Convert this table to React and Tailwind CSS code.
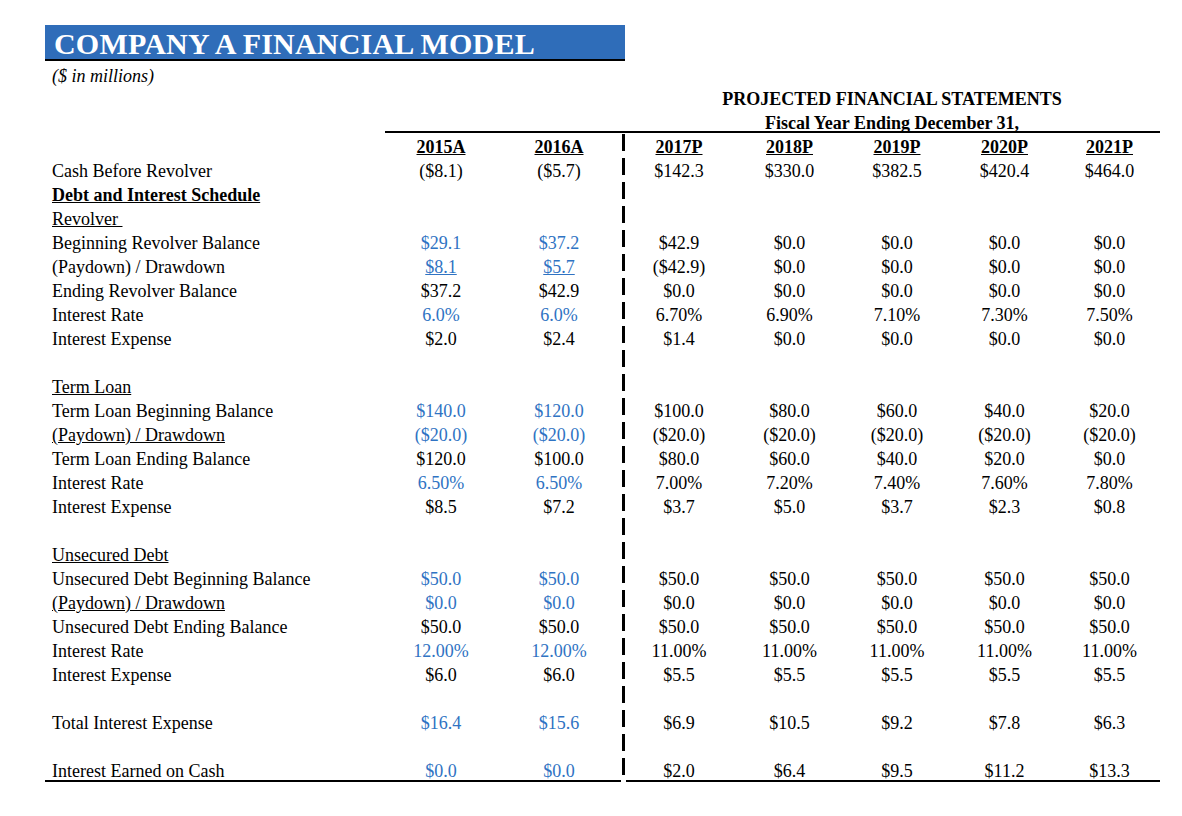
import React from "react";

const B = "blue";
const K = "black";

const rows = [
  { label: "Cash Before Revolver", a: [["($8.1)", K], ["($5.7)", K]], p: ["$142.3", "$330.0", "$382.5", "$420.4", "$464.0"] },
  { label: "Debt and Interest Schedule", ls: "bu" },
  { label: "Revolver\u00a0", ls: "u" },
  { label: "Beginning Revolver Balance", a: [["$29.1", B], ["$37.2", B]], p: ["$42.9", "$0.0", "$0.0", "$0.0", "$0.0"] },
  { label: "(Paydown) / Drawdown", a: [["$8.1", B, true], ["$5.7", B, true]], p: ["($42.9)", "$0.0", "$0.0", "$0.0", "$0.0"] },
  { label: "Ending Revolver Balance", a: [["$37.2", K], ["$42.9", K]], p: ["$0.0", "$0.0", "$0.0", "$0.0", "$0.0"] },
  { label: "Interest Rate", a: [["6.0%", B], ["6.0%", B]], p: ["6.70%", "6.90%", "7.10%", "7.30%", "7.50%"] },
  { label: "Interest Expense", a: [["$2.0", K], ["$2.4", K]], p: ["$1.4", "$0.0", "$0.0", "$0.0", "$0.0"] },
  { label: "" },
  { label: "Term Loan", ls: "u" },
  { label: "Term Loan Beginning Balance", a: [["$140.0", B], ["$120.0", B]], p: ["$100.0", "$80.0", "$60.0", "$40.0", "$20.0"] },
  { label: "(Paydown) / Drawdown", ls: "u", a: [["($20.0)", B], ["($20.0)", B]], p: ["($20.0)", "($20.0)", "($20.0)", "($20.0)", "($20.0)"] },
  { label: "Term Loan Ending Balance", a: [["$120.0", K], ["$100.0", K]], p: ["$80.0", "$60.0", "$40.0", "$20.0", "$0.0"] },
  { label: "Interest Rate", a: [["6.50%", B], ["6.50%", B]], p: ["7.00%", "7.20%", "7.40%", "7.60%", "7.80%"] },
  { label: "Interest Expense", a: [["$8.5", K], ["$7.2", K]], p: ["$3.7", "$5.0", "$3.7", "$2.3", "$0.8"] },
  { label: "" },
  { label: "Unsecured Debt", ls: "u" },
  { label: "Unsecured Debt Beginning Balance", a: [["$50.0", B], ["$50.0", B]], p: ["$50.0", "$50.0", "$50.0", "$50.0", "$50.0"] },
  { label: "(Paydown) / Drawdown", ls: "u", a: [["$0.0", B], ["$0.0", B]], p: ["$0.0", "$0.0", "$0.0", "$0.0", "$0.0"] },
  { label: "Unsecured Debt Ending Balance", a: [["$50.0", K], ["$50.0", K]], p: ["$50.0", "$50.0", "$50.0", "$50.0", "$50.0"] },
  { label: "Interest Rate", a: [["12.00%", B], ["12.00%", B]], p: ["11.00%", "11.00%", "11.00%", "11.00%", "11.00%"] },
  { label: "Interest Expense", a: [["$6.0", K], ["$6.0", K]], p: ["$5.5", "$5.5", "$5.5", "$5.5", "$5.5"] },
  { label: "" },
  { label: "Total Interest Expense", a: [["$16.4", B], ["$15.6", B]], p: ["$6.9", "$10.5", "$9.2", "$7.8", "$6.3"] },
  { label: "" },
  { label: "Interest Earned on Cash", a: [["$0.0", B], ["$0.0", B]], p: ["$2.0", "$6.4", "$9.5", "$11.2", "$13.3"] },
];

const projW = ["w-[106px]", "w-[115px]", "w-[100px]", "w-[115px]", "w-[95px]"];
const projYears = ["2017P", "2018P", "2019P", "2020P", "2021P"];

function Label({ r }) {
  let cls = "";
  if (r.ls === "bu") cls = "font-bold underline";
  else if (r.ls === "u") cls = "underline";
  return <span className={cls}>{r.label}</span>;
}

export default function App() {
  const last = rows.length - 1;
  return (
    <div
      className="w-[1182px] h-[816px] bg-white text-black text-[18px] leading-[24px]"
      style={{ fontFamily: '"Liberation Serif", "Times New Roman", serif' }}
    >
      <div className="ml-[45px] pt-[25px] w-[1115px]">
        {/* Title */}
        <div className="w-[580px] h-[36px] bg-[#2f6db9] border-b-2 border-black pl-[9px] pt-[4px]">
          <span className="text-white font-bold text-[30px] tracking-[0.2px] leading-none block">COMPANY A FINANCIAL MODEL</span>
        </div>
        <div className="mt-[3px] h-[23px] pl-[7px] italic">($ in millions)</div>

        {/* Projected heading */}
        <div className="flex h-[24px]">
          <div className="w-[579px]" />
          <div className="w-[536px] text-center font-bold">PROJECTED FINANCIAL STATEMENTS</div>
        </div>
        <div className="flex">
          <div className="w-[340px]" />
          <div className="flex-1 flex border-b-2 border-black h-[22px]">
            <div className="w-[239px]" />
            <div className="w-[536px] text-center font-bold h-[20px]">Fiscal Year Ending December 31,</div>
          </div>
        </div>

        {/* Table */}
        <div className="flex">
          {/* Left part: labels + actuals */}
          <div className="w-[576px] border-b-2 border-black pt-[2px]">
            <div className="flex h-[24px]">
              <div className="w-[340px]" />
              <div className="w-[112px] text-center font-bold underline">2015A</div>
              <div className="w-[124px] text-center font-bold underline">2016A</div>
            </div>
            {rows.map((r, i) => (
              <div key={i} className={`flex ${i === last ? "h-[21px]" : "h-[24px]"} whitespace-nowrap`}>
                <div className="w-[340px] pl-[7px]">
                  <Label r={r} />
                </div>
                {(r.a || [["", K], ["", K]]).map((v, j) => (
                  <div
                    key={j}
                    className={`${j === 0 ? "w-[112px]" : "w-[124px]"} text-center ${v[1] === B ? "text-[#2f73c3]" : "text-black"} ${v[2] ? "underline" : ""}`}
                  >
                    {v[0]}
                  </div>
                ))}
              </div>
            ))}
          </div>

          {/* Divider */}
          <div className="w-[5px] flex justify-center">
            <div className="w-[3px] mt-[1px] mb-[5px] bg-[image:repeating-linear-gradient(to_bottom,#000_0px,#000_17px,transparent_17px,transparent_24px)]" />
          </div>

          {/* Right part: projected */}
          <div className="w-[534px] border-b-2 border-black pt-[2px]">
            <div className="flex h-[24px]">
              {projYears.map((y, j) => (
                <div key={y} className={`${projW[j]} text-center font-bold underline`}>{y}</div>
              ))}
            </div>
            {rows.map((r, i) => (
              <div key={i} className={`flex ${i === last ? "h-[21px]" : "h-[24px]"} whitespace-nowrap`}>
                {(r.p || ["", "", "", "", ""]).map((v, j) => (
                  <div key={j} className={`${projW[j]} text-center`}>{v}</div>
                ))}
              </div>
            ))}
          </div>
        </div>
      </div>
    </div>
  );
}
